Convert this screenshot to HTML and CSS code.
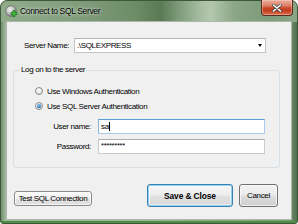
FILE: index.html
```html
<!DOCTYPE html>
<html>
<head>
<meta charset="utf-8">
<title>Connect to SQL Server</title>
<link rel="stylesheet" href="styles.css">
</head>
<body>
<div class="window">
  <div class="titlebar">
    <svg class="app-icon" width="13" height="13" viewBox="0 0 13 13">
      <defs>
        <radialGradient id="sph" cx="0.4" cy="0.35" r="0.7">
          <stop offset="0" stop-color="#f4f4f4"/>
          <stop offset="0.6" stop-color="#b8b8b8"/>
          <stop offset="1" stop-color="#7a7a7a"/>
        </radialGradient>
      </defs>
      <circle cx="6" cy="6" r="5.3" fill="url(#sph)" stroke="#6b6b6b" stroke-width="0.8"/>
      <path d="M8 5.5h2v2h2v2h-2v2h-2v-2h-2v-2h2z" fill="#3fbf3a" stroke="#1d6e1b" stroke-width="0.7"/>
    </svg>
    <span class="title">Connect to SQL Server</span>
    <div class="close">
      <svg width="10" height="8" viewBox="0 0 10 8">
        <path d="M1.5 1l7 6M8.5 1l-7 6" stroke="#4a4a4a" stroke-width="3" stroke-linecap="round"/>
        <path d="M1.5 1l7 6M8.5 1l-7 6" stroke="#ffffff" stroke-width="1.6" stroke-linecap="round"/>
      </svg>
    </div>
  </div>
  <div class="client">
    <div class="server-row">
      <span class="server-lbl">Server Name:</span>
      <div class="combo">
        <span class="combo-text">.\SQLEXPRESS</span>
        <span class="combo-arrow"></span>
      </div>
    </div>
    <div class="group">
      <span class="legend">Log on to the server</span>
      <div class="radio-row"><span class="radio"></span><span>Use Windows Authentication</span></div>
      <div class="radio-row second"><span class="radio checked"></span><span>Use SQL Server Authentication</span></div>
      <div class="field-row first-field">
        <span class="field-lbl">User name:</span>
        <div class="textbox focused"><span>sa</span><span class="caret"></span></div>
      </div>
      <div class="field-row second-field">
        <span class="field-lbl">Password:</span>
        <div class="textbox"><span class="mask">*********</span></div>
      </div>
    </div>
    <div class="buttons">
      <button class="btn test">Test SQL Connection</button>
      <div class="spacer"></div>
      <button class="btn default">Save &amp; Close</button>
      <button class="btn cancel">Cancel</button>
    </div>
  </div>
</div>
</body>
</html>
```

FILE: styles.css
```css
* { box-sizing: border-box; }

body {
  margin: 0;
  background: #ffffff;
  font-family: "Liberation Sans", Arial, sans-serif;
  font-size: 8px;
  letter-spacing: -0.35px;
  color: #000000;
}

.window {
  width: 298px;
  height: 224px;
  border: 1px solid #3c5839;
  border-radius: 7px 7px 3px 3px;
  padding: 0 5px 3px 5px;
  display: flex;
  flex-direction: column;
  background:
    linear-gradient(90deg, #8fab8a 0%, #819e7b 25%, #6d8c68 45%, #5a7955 54%, #7d9b78 60%, #a9bfa5 68%, #b3c7af 71%, #8aa685 79%, #7e9c79 90%, #89a684 100%) top left / 100% 21px no-repeat,
    linear-gradient(90deg, #6f8d6a 0%, #a3b99f 1.5%, #9fb69a 50%, #7f9d7a 97%, #4f6e4b 100%);
  box-shadow: inset 0 -2px 0 #4f8c47;
}

.titlebar {
  height: 20px;
  margin: 0 -5px;
  padding-left: 4px;
  display: flex;
  align-items: center;
}

.app-icon {
  flex: none;
  margin-top: 1px;
}

.title {
  margin-left: 2px;
  font-size: 8.5px;
  letter-spacing: -0.35px;
  color: #000;
  text-shadow: 0 0 4px rgba(255, 255, 255, 0.7), 0 0 2px rgba(255, 255, 255, 0.5);
}

.close {
  margin-left: auto;
  margin-right: 4px;
  align-self: flex-start;
  margin-top: -1px;
  width: 32px;
  height: 16px;
  border: 1px solid #5a2b20;
  border-top: none;
  border-radius: 0 0 4px 4px;
  background: linear-gradient(180deg, #eab0a0 0%, #dc7c63 40%, #c9482a 52%, #c23d1d 70%, #d9704f 100%);
  box-shadow: inset 0 0 0 1px rgba(255, 210, 195, 0.45);
  display: flex;
  align-items: center;
  justify-content: center;
}

.client {
  height: 199px;
  background: #f0f0f0;
  border: 1px solid #a9b9a6;
  display: flex;
  flex-direction: column;
}

.server-row {
  margin-top: 16px;
  height: 15px;
  padding-left: 17px;
  display: flex;
  align-items: center;
}

.server-lbl {
  width: 50px;
}

.combo {
  width: 192px;
  height: 15px;
  background: #ffffff;
  border: 1px solid #c3c3c3;
  border-top-color: #b4b4b4;
  display: flex;
  align-items: center;
  justify-content: space-between;
  padding: 0 3px 0 2px;
}

.combo-arrow {
  width: 0;
  height: 0;
  border-left: 2.5px solid transparent;
  border-right: 2.5px solid transparent;
  border-top: 3px solid #000;
}

.group {
  position: relative;
  margin: 17px 0 0 6px;
  width: 267px;
  border: 1px solid #d5dfe5;
  border-radius: 3px;
  padding: 14px 13px 13px 0;
  display: flex;
  flex-direction: column;
}

.legend {
  position: absolute;
  top: -6px;
  left: 6px;
  padding: 0 1px;
  background: #f0f0f0;
  line-height: 10px;
}

.radio-row {
  height: 12px;
  padding-left: 21px;
  display: flex;
  align-items: center;
  gap: 4px;
}

.radio-row.second {
  margin-top: 3px;
}

.radio {
  width: 8px;
  height: 8px;
  border-radius: 50%;
  border: 1px solid #8b8d8f;
  background: radial-gradient(circle at 40% 35%, #ffffff 0%, #e8e8e8 50%, #cfd0d1 100%);
  display: flex;
  align-items: center;
  justify-content: center;
}

.radio.checked::after {
  content: "";
  width: 4px;
  height: 4px;
  border-radius: 50%;
  background: radial-gradient(circle at 40% 35%, #8fd3f5 0%, #2a7fbf 55%, #0f3f6e 100%);
}

.field-row {
  height: 15px;
  display: flex;
  align-items: center;
}

.field-row.first-field {
  margin-top: 7px;
}

.field-row.second-field {
  margin-top: 5px;
}

.field-lbl {
  width: 77px;
  text-align: right;
  margin-right: 7px;
}

.textbox {
  width: 167px;
  height: 15px;
  background: #ffffff;
  border: 1px solid #c9cbcf;
  border-top-color: #abadb3;
  padding-left: 2px;
  display: flex;
  align-items: center;
}

.textbox.focused {
  border-color: #a9cbeb;
  border-top-color: #5d9bd3;
  border-left-color: #86b5e0;
}

.caret {
  width: 1px;
  height: 9px;
  background: #000;
  margin-left: 0.5px;
}

.mask {
  align-self: flex-start;
  margin-top: 1px;
  font-size: 7.6px;
  letter-spacing: -0.3px;
}

.buttons {
  margin-top: 16px;
  height: 23px;
  padding: 0 13px 0 7px;
  display: flex;
  align-items: flex-end;
}

.spacer {
  flex: 1;
}

.btn {
  font-family: "Liberation Sans", Arial, sans-serif;
  font-size: 8px;
  letter-spacing: -0.35px;
  color: #000;
  padding: 0;
  margin: 0;
  border: 1px solid #707070;
  border-radius: 3px;
  background: linear-gradient(180deg, #f2f2f2 0%, #ebebeb 48%, #dddddd 52%, #cfcfcf 100%);
  box-shadow: inset 0 0 0 1px rgba(255, 255, 255, 0.7);
  display: flex;
  align-items: center;
  justify-content: center;
}

.btn.test {
  width: 78px;
  height: 15px;
  margin-bottom: 1px;
  border-color: #8a8a8a;
  background: linear-gradient(180deg, #fafafa 0%, #f0f0f0 48%, #e4e4e4 52%, #dcdcdc 100%);
}

.btn.default {
  width: 86px;
  height: 23px;
  font-weight: bold;
  font-size: 8.4px;
  letter-spacing: -0.1px;
  border-color: #3c7fb1;
  background: linear-gradient(180deg, #f6f6f6 0%, #eeeeee 48%, #e2e2e2 52%, #d8d8d8 100%);
  box-shadow: inset 0 0 0 1px #8fd1f4, inset 0 0 0 2px rgba(255, 255, 255, 0.5);
}

.btn.cancel {
  width: 39px;
  height: 23px;
  margin-left: 6px;
}
```
